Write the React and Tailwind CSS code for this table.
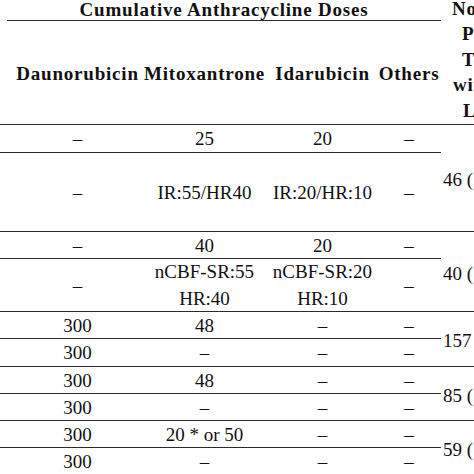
import React from 'react';

const groups = [
    {
        total: '46 (',
        rows: [
            { h: 'h-[27px]', cells: ['–', '25', '20', '–'] },
            { h: 'h-[79px] border-t', cells: ['–', 'IR:55/HR40', 'IR:20/HR:10', '–'] },
        ],
    },
    {
        total: '40 (',
        rows: [
            { h: 'h-[26px]', cells: ['–', '40', '20', '–'] },
            { h: 'h-[53px] border-t', cells: ['–', ['nCBF-SR:55', 'HR:40'], ['nCBF-SR:20', 'HR:10'], '–'] },
        ],
    },
    {
        total: '157',
        rows: [
            { h: 'h-[26px]', cells: ['300', '48', '–', '–'] },
            { h: 'h-[28px] border-t', cells: ['300', '–', '–', '–'] },
        ],
    },
    {
        total: '85 (',
        rows: [
            { h: 'h-[26px]', cells: ['300', '48', '–', '–'] },
            { h: 'h-[27px] border-t', cells: ['300', '–', '–', '–'] },
        ],
    },
    {
        total: '59 (',
        rows: [
            { h: 'h-[26px]', cells: ['300', '20 * or 50', '–', '–'] },
            { h: 'h-[27px] border-t', cells: ['300', '–', '–', '–'] },
        ],
    },
];

const colClass = [
    'w-[141px] pl-[14px]',
    'w-[127px]',
    'w-[109px]',
    'w-[64px]',
];

function Cell({ value, i }) {
    const multi = Array.isArray(value);
    return (
        <div className={`${colClass[i]} shrink-0 flex flex-col items-center justify-center text-center whitespace-nowrap ${multi ? 'leading-[27px]' : 'pt-[2px]'}`}>
            {multi ? value.map((line) => <span key={line}>{line}</span>) : value}
        </div>
    );
}

export default function App() {
    return (
        <div className="w-[474px] h-[474px] overflow-hidden bg-white text-[#111] text-[19px] font-['Liberation_Serif',serif]">
            {/* Header */}
            <div className="flex h-[124px]">
                <div className="w-[441px] shrink-0 flex flex-col font-bold tracking-[0.8px]">
                    <div className="h-[20px] leading-[20px] pl-[7px] text-center whitespace-nowrap">
                        Cumulative Anthracycline Doses
                    </div>
                    <div className="ml-[7px] border-t border-[#2b2b2b]"></div>
                    <div className="flex flex-1 items-center pt-[3px]">
                        <div className="w-[141px] pl-[14px] text-center whitespace-nowrap">Daunorubicin</div>
                        <div className="w-[127px] text-center whitespace-nowrap">Mitoxantrone</div>
                        <div className="w-[109px] text-center whitespace-nowrap">Idarubicin</div>
                        <div className="w-[64px] text-center whitespace-nowrap">Others</div>
                    </div>
                </div>
                <div className="flex-1 flex flex-col leading-[25.5px] font-bold tracking-[0.8px] whitespace-nowrap">
                    <span className="pl-[11px] leading-[17px] mb-[4px]">No. of</span>
                    <span className="pl-[21px]">Patients</span>
                    <span className="pl-[21px]">Treated</span>
                    <span className="pl-[12px]">with</span>
                    <span className="pl-[22px]">LVD</span>
                </div>
            </div>

            {/* Body */}
            {groups.map((g, gi) => (
                <div key={gi} className="flex border-t border-[#2b2b2b]">
                    <div className="w-[441px] shrink-0 flex flex-col">
                        {g.rows.map((r, ri) => (
                            <div key={ri} className={`flex border-[#2b2b2b] ${r.h}`}>
                                {r.cells.map((c, ci) => (
                                    <Cell key={ci} value={c} i={ci} />
                                ))}
                            </div>
                        ))}
                    </div>
                    <div className="flex-1 flex items-center pl-[2px] pt-[5px] whitespace-nowrap">{g.total}</div>
                </div>
            ))}
        </div>
    );
}
